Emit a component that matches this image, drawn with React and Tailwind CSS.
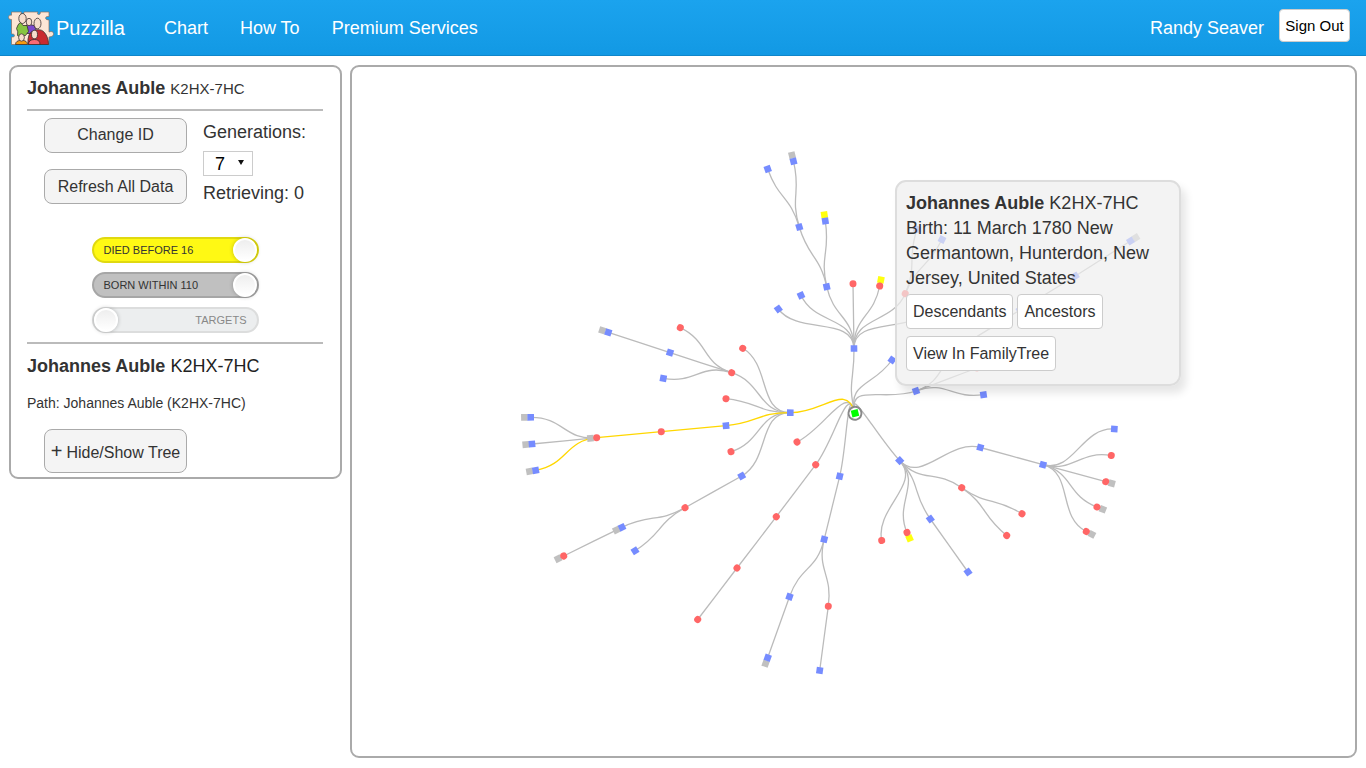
import React, { useState } from 'react';

const STEP = 64.8;
const ROOT = { x: 855, y: 413.3, angle: -104 };

// kind: m = male (square), f = female (circle)
// tag: gray = born within 110, yellow = died before 16
const TREE = [
    {
        kind: 'm', x: 790.3, y: 412.7, path: true, children: [
            { kind: 'f', x: 742.7, y: 348.3 },
            {
                kind: 'f', x: 731.7, y: 372.7, children: [
                    { kind: 'f', x: 680.3, y: 327.7 },
                    { kind: 'm', x: 670, y: 352.7, children: [{ kind: 'm', x: 608.3, y: 332.3, tag: 'gray' }] },
                    { kind: 'm', x: 663.3, y: 378.3 },
                ],
            },
            { kind: 'f', x: 726, y: 398.7 },
            {
                kind: 'm', x: 726, y: 425.7, path: true, children: [
                    {
                        kind: 'f', x: 661.3, y: 431.7, path: true, children: [
                            {
                                kind: 'f', x: 596.7, y: 437.7, path: true, tag: 'gray', children: [
                                    { kind: 'm', x: 530.7, y: 417.3, tag: 'gray' },
                                    { kind: 'm', x: 532, y: 444, tag: 'gray' },
                                    { kind: 'm', x: 535.7, y: 470.3, tag: 'gray', path: true },
                                ],
                            },
                        ],
                    },
                ],
            },
            { kind: 'f', x: 731, y: 451.7 },
            {
                kind: 'm', x: 741.7, y: 476, children: [
                    {
                        kind: 'f', x: 685, y: 507.7, children: [
                            { kind: 'm', x: 622, y: 527.3, tag: 'gray', children: [{ kind: 'f', x: 563.7, y: 556, tag: 'gray' }] },
                            { kind: 'm', x: 635, y: 550.7 },
                        ],
                    },
                ],
            },
        ],
    },
    { kind: 'f', x: 797, y: 442 },
    {
        kind: 'f', x: 815.7, y: 464.7, children: [
            { kind: 'f', x: 776.3, y: 516.7, children: [{ kind: 'f', x: 737, y: 568, children: [{ kind: 'f', x: 697.7, y: 619.5 }] }] },
        ],
    },
    {
        kind: 'm', x: 839.7, y: 476.3, children: [
            {
                kind: 'm', x: 824.2, y: 539.3, children: [
                    { kind: 'm', x: 789.5, y: 596.7, children: [{ kind: 'm', x: 767.7, y: 657.7, tag: 'gray' }] },
                    { kind: 'f', x: 828.3, y: 606.3, children: [{ kind: 'm', x: 819.7, y: 670.5 }] },
                ],
            },
        ],
    },
    {
        kind: 'm', x: 854, y: 348.5, children: [
            { kind: 'm', x: 778.3, y: 309 },
            { kind: 'm', x: 801, y: 295.3 },
            {
                kind: 'm', x: 826.7, y: 286.7, children: [
                    {
                        kind: 'm', x: 799.3, y: 227, children: [
                            { kind: 'm', x: 767.7, y: 169 },
                            { kind: 'm', x: 793.5, y: 161.3, tag: 'gray' },
                        ],
                    },
                    { kind: 'm', x: 825.3, y: 221, tag: 'yellow' },
                ],
            },
            { kind: 'f', x: 853, y: 283.7 },
            { kind: 'f', x: 879.7, y: 286, tag: 'yellow' },
            {
                kind: 'f', x: 905.2, y: 293.7, children: [
                    { kind: 'm', x: 917, y: 229.3 },
                    { kind: 'm', x: 942, y: 239.5 },
                ],
            },
            { kind: 'm', x: 931, y: 308 },
        ],
    },
    { kind: 'm', x: 892, y: 360 },
    {
        kind: 'm', x: 916, y: 391, children: [
            {
                kind: 'm', x: 965, y: 344, children: [
                    { kind: 'm', x: 1020, y: 310, children: [{ kind: 'm', x: 1075.3, y: 276, children: [{ kind: 'm', x: 1130.5, y: 241, tag: 'gray' }] }] },
                ],
            },
            { kind: 'f', x: 977, y: 368 },
            { kind: 'm', x: 983.5, y: 394.7 },
        ],
    },
    {
        kind: 'm', x: 899.7, y: 460.7, children: [
            {
                kind: 'm', x: 980.3, y: 447.5, children: [
                    {
                        kind: 'm', x: 1043, y: 464.7, children: [
                            { kind: 'm', x: 1114.3, y: 429 },
                            { kind: 'f', x: 1111.3, y: 455.5 },
                            { kind: 'f', x: 1105.7, y: 481.7, tag: 'gray' },
                            { kind: 'f', x: 1097, y: 507, tag: 'gray' },
                            { kind: 'f', x: 1086.3, y: 531.5, tag: 'gray' },
                        ],
                    },
                ],
            },
            {
                kind: 'f', x: 961.7, y: 487.7, children: [
                    { kind: 'f', x: 1022, y: 513.7 },
                    { kind: 'f', x: 1006.7, y: 535.5 },
                ],
            },
            { kind: 'm', x: 930.3, y: 519, children: [{ kind: 'm', x: 968, y: 572 }] },
            { kind: 'f', x: 907, y: 532.5, tag: 'yellow' },
            { kind: 'f', x: 881.7, y: 540.5 },
        ],
    },
];

const angleOf = (node) => (Math.atan2(node.y - ROOT.y, node.x - ROOT.x) * 180) / Math.PI;

const polar = (r, deg) => {
    const a = (deg * Math.PI) / 180;
    return `${(ROOT.x + r * Math.cos(a)).toFixed(2)},${(ROOT.y + r * Math.sin(a)).toFixed(2)}`;
};

const nodes = [];
const links = [];

// radial diagonal: both control points sit half way between the two rings
const walk = (children, parent, parentAngle, depth) => {
    children.forEach((node) => {
        const angle = angleOf(node);
        const mid = (depth - 0.5) * STEP;
        links.push({
            path: node.path,
            d: `M${parent.x},${parent.y}C${polar(mid, parentAngle)} ${polar(mid, angle)} ${node.x},${node.y}`,
        });
        nodes.push({ ...node, angle });
        walk(node.children || [], node, angle, depth + 1);
    });
};
walk(TREE, ROOT, ROOT.angle, 1);
links.sort((a, b) => (a.path ? 1 : 0) - (b.path ? 1 : 0));

function Logo() {
    return (
        <svg viewBox="0 0 46 34" className="h-[34px] w-[46px]" aria-hidden="true">
            <path
                d="M3.500 1H13.500q-1.500 2 .5 2.500T16 1H30q-1.500 2 .5 2.500T32.500 1H41V5.500q-3.500-.5-3.500 1.500T41 9V21q4-1.500 4.500 1.500T41 26V33.500H3.500V26q3 .5 3-1.500t-3-1.500V8.500q-3 .5-3-2.300t3-2z"
                fill="#fde6d6" stroke="#8a6f60" strokeWidth=".7"
            />
            <g stroke="#3b3030" strokeWidth=".8">
                <path d="M18 14.500q3-2 8 0l2 4-3 4h-6l-1-4z" fill="#7c48d0" />
                <path d="M10 14q2-3 3-2.500l2 3h4l1.500 6-3 4h-2l-1 3-5-3q1-4-1-7z" fill="#86c440" />
                <path d="M20 33.500q-1-12 6-14 6-2 9.500 1 5 5 5 13z" fill="#c92a2f" />
                <ellipse cx="14.500" cy="7.500" rx="3.700" ry="5" fill="#f6ddcc" />
                <ellipse cx="21" cy="11" rx="2.800" ry="3.700" fill="#f6ddcc" />
                <ellipse cx="29.500" cy="12.500" rx="3.500" ry="5.300" fill="#f6ddcc" />
                <path d="M7.500 33.500q0-4 6-4.300 6 .3 6 4.300z" fill="#f79a10" />
                <path d="M20.500 33.500q0-5 6-5 5.500 0 5.500 5z" fill="#fb6b74" />
                <ellipse cx="13.500" cy="26.500" rx="2.900" ry="3.700" fill="#f6ddcc" />
                <ellipse cx="26.500" cy="23.500" rx="3" ry="4.200" fill="#f6ddcc" />
            </g>
        </svg>
    );
}

function Toggle({ label, color, checked, onChange }) {
    return (
        <label
            className={`relative flex h-[26px] w-[167px] cursor-pointer items-center rounded-full border-2 px-2.5 text-[11px] ${
                checked ? `${color} text-[#333]` : 'justify-end border-[#dcdddd] bg-[#eceeef] text-[#888]'
            }`}
        >
            <input type="checkbox" className="sr-only" checked={checked} onChange={onChange} />
            {label}
            <span
                className={`absolute -top-px size-6 rounded-full border-2 border-white bg-linear-to-b from-[#eeeeee] to-white shadow-[0_0_4px_rgba(0,0,0,0.25)] ${
                    checked ? 'right-0' : 'left-0'
                }`}
            />
        </label>
    );
}

function SideButton({ className, children }) {
    return (
        <button className={`w-[143px] rounded-lg border border-[#aaa] bg-[#f4f4f4] text-base text-[#333] ${className}`}>
            {children}
        </button>
    );
}

function PopupButton({ children }) {
    return (
        <button className="h-[35px] rounded border border-[#ccc] bg-white px-1.5 text-base text-[#333]">
            {children}
        </button>
    );
}

function Chart() {
    return (
        <svg viewBox="352 67 1003 689" className="h-auto w-full" role="img" aria-label="Descendants chart">
            <g fill="none" strokeWidth="1.300">
                {links.map((link) => (
                    <path key={link.d} d={link.d} stroke={link.path ? '#ffd700' : '#bbb'} />
                ))}
            </g>
            {nodes.map((node) => (
                <g key={`${node.x}-${node.y}`} transform={`translate(${node.x} ${node.y}) rotate(${node.angle})`}>
                    {node.tag && (
                        <rect x="3" y="-3.300" width="6.600" height="6.600" fill={node.tag === 'gray' ? '#c0c0c0' : '#ffff10'} />
                    )}
                    {node.kind === 'm' ? (
                        <rect x="-3.300" y="-3.300" width="6.600" height="6.600" fill="#768cff" />
                    ) : (
                        <circle r="3.500" fill="#ff6666" />
                    )}
                </g>
            ))}
            <g transform={`translate(${ROOT.x} ${ROOT.y}) rotate(${ROOT.angle})`}>
                <circle r="6.500" fill="#fff" stroke="#888" strokeWidth="2" />
                <rect x="-3.500" y="-3.500" width="7" height="7" fill="#00ff00" />
            </g>
        </svg>
    );
}

export default function App() {
    const [generations, setGenerations] = useState('7');
    const [died, setDied] = useState(true);
    const [born, setBorn] = useState(true);
    const [targets, setTargets] = useState(false);

    return (
        <div className="min-h-screen bg-white font-['Liberation_Sans',Arial,sans-serif] text-[#333]">
            <header className="flex h-14 items-center border-b border-[#0f86ca] bg-linear-to-b from-[#1ba3ee] to-[#1299e4] pr-4 pl-2 text-lg text-white">
                <a href="#" className="flex items-center gap-0.5 text-xl">
                    <Logo />
                    Puzzilla
                </a>
                <nav className="ml-[39px] flex gap-8">
                    <a href="#chart">Chart</a>
                    <a href="#howto">How To</a>
                    <a href="#premium">Premium Services</a>
                </nav>
                <span className="ml-auto">Randy Seaver</span>
                <button className="mb-1 ml-[15px] h-[33px] w-[71px] rounded border border-[#ccc] bg-white text-[15px] text-black">
                    Sign Out
                </button>
            </header>

            <main className="flex items-start gap-2 px-[9px] pt-[9px] pb-2.5">
                <aside className="w-[333px] shrink-0 rounded-[9px] border-2 border-[#aaa] pt-[9px] pr-[17px] pb-1 pl-4">
                    <h1 className="h-[33px] text-lg leading-6 font-bold">
                        Johannes Auble <span className="text-[15px] font-normal">K2HX-7HC</span>
                    </h1>
                    <hr className="border-t-2 border-[#bbb]" />

                    <div className="mt-[7px] flex gap-4 pl-[17px]">
                        <div className="flex flex-col gap-4">
                            <SideButton className="h-[35px] pb-0.5">Change ID</SideButton>
                            <SideButton className="h-[35px]">Refresh All Data</SideButton>
                        </div>
                        <div className="text-lg leading-7">
                            <label htmlFor="generations" className="block">Generations:</label>
                            <div className="relative mt-[5px] mb-[3px] h-[25px] w-[50px]">
                                <select
                                    id="generations"
                                    value={generations}
                                    onChange={(e) => setGenerations(e.target.value)}
                                    className="block h-full w-full appearance-none border border-[#ccc] bg-white pl-[11px] leading-5 text-black"
                                >
                                    {['1', '2', '3', '4', '5', '6', '7', '8'].map((n) => (
                                        <option key={n}>{n}</option>
                                    ))}
                                </select>
                                <svg viewBox="0 0 6 5" className="pointer-events-none absolute top-[9px] right-[9px] h-[5px] w-1.5">
                                    <path d="M0 0h6L3 5z" fill="#111" />
                                </svg>
                            </div>
                            <p>Retrieving: 0</p>
                        </div>
                    </div>

                    <div className="mt-[30px] mb-[9px] flex flex-col items-center gap-[9px]">
                        <Toggle label="DIED BEFORE 16" color="border-[#e0d910] bg-[#fff914]" checked={died} onChange={() => setDied(!died)} />
                        <Toggle label="BORN WITHIN 110" color="border-[#a6a6a6] bg-[#c0c0c0]" checked={born} onChange={() => setBorn(!born)} />
                        <Toggle label="TARGETS" checked={targets} onChange={() => setTargets(!targets)} />
                    </div>
                    <hr className="border-t-2 border-[#bbb]" />

                    <h2 className="mt-2.5 text-lg leading-6">
                        <b>Johannes Auble</b> <span className="text-[#222]">K2HX-7HC</span>
                    </h2>
                    <p className="mt-[15px] text-sm leading-5">Path: Johannes Auble (K2HX-7HC)</p>
                    <div className="mt-4 pl-[17px]">
                        <SideButton className="flex h-11 items-center justify-center gap-1 pt-1">
                            <span className="pb-1 text-xl leading-5">+</span>
                            Hide/Show Tree
                        </SideButton>
                    </div>
                </aside>

                <section className="relative flex min-w-0 flex-1 rounded-[9px] border-2 border-[#aaa]">
                    <Chart />
                    <div className="absolute top-[113px] left-[543px] h-[206px] w-[286px] rounded-[11px] border-2 border-[#ddd] bg-[#eeeeee]/70 px-[9px] pt-[9px] text-lg leading-[25px] shadow-[5px_7px_8px_rgba(0,0,0,0.1)]">
                        <p>
                            <b>Johannes Auble</b> K2HX-7HC
                        </p>
                        <p>Birth: 11 March 1780 New Germantown, Hunterdon, New Jersey, United States</p>
                        <div className="mt-[3px] flex flex-wrap gap-x-1 gap-y-[7px]">
                            <PopupButton>Descendants</PopupButton>
                            <PopupButton>Ancestors</PopupButton>
                            <PopupButton>View In FamilyTree</PopupButton>
                        </div>
                    </div>
                </section>
            </main>
        </div>
    );
}
